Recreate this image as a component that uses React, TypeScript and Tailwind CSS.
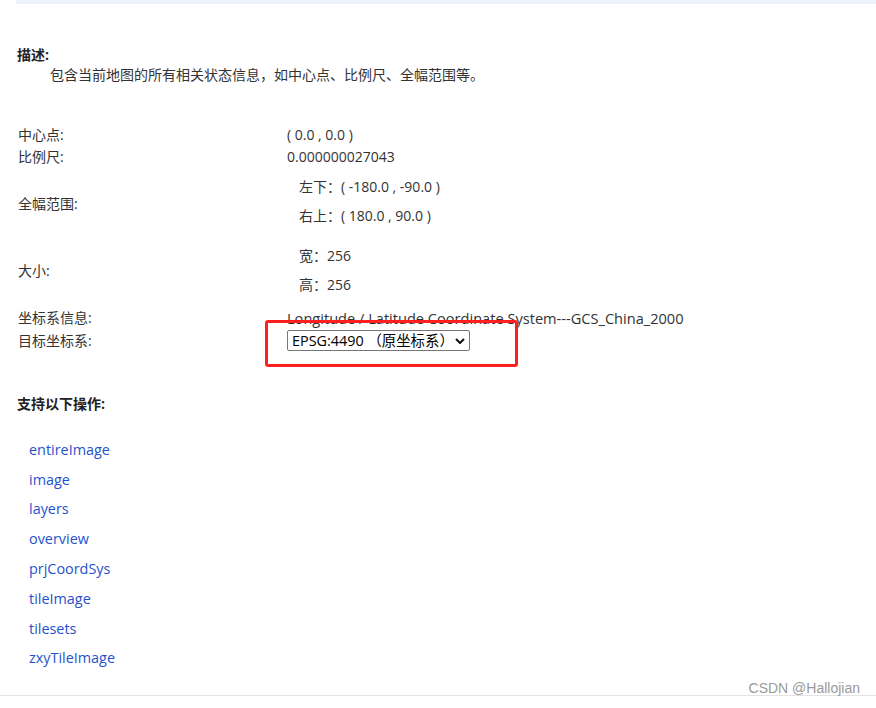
import { useState } from "react";

const links = [
  "entireImage",
  "image",
  "layers",
  "overview",
  "prjCoordSys",
  "tileImage",
  "tilesets",
  "zxyTileImage",
];

function Label({ children }: { children: React.ReactNode }) {
  return <div className="w-[269px] shrink-0">{children}</div>;
}

export default function App() {
  const [target, setTarget] = useState("4490");

  return (
    <div className="relative h-[708px] w-[876px] overflow-hidden bg-white font-['Open_Sans','Noto_Sans_CJK_SC',sans-serif] text-[14px] leading-[22px] text-[#333]">
      <div className="ml-[16px] h-[4px] bg-[#eef3fb]" />

      <section className="pl-[17px] pt-[40px]">
        <h4 className="font-bold text-[#222]">描述:</h4>
        <p className="-mt-[2px] pl-[33px]">
          包含当前地图的所有相关状态信息，如中心点、比例尺、全幅范围等。
        </p>
      </section>

      <div className="mt-[38px] pl-[18px]">
        <div className="flex h-[22px] items-center">
          <Label>中心点:</Label>
          <div>( 0.0 , 0.0 )</div>
        </div>
        <div className="flex h-[22px] items-center">
          <Label>比例尺:</Label>
          <div>0.000000027043</div>
        </div>

        <div className="flex h-[72px] items-center">
          <Label>全幅范围:</Label>
          <div className="flex h-full flex-col pl-[12px] pt-[4px]">
            <div className="flex h-[29px] items-center">左下：( -180.0 , -90.0 )</div>
            <div className="flex h-[29px] items-center">右上：( 180.0 , 90.0 )</div>
          </div>
        </div>

        <div className="flex h-[62px] items-center">
          <Label>大小:</Label>
          <div className="flex h-full flex-col pl-[12px] pt-[1px]">
            <div className="flex h-[29px] items-center">宽：256</div>
            <div className="flex h-[29px] items-center">高：256</div>
          </div>
        </div>

        <div className="mt-[5px] flex h-[22px] items-center">
          <Label>坐标系信息:</Label>
          <div className="text-[14.6px]">
            Longitude / Latitude Coordinate System---GCS_China_2000
          </div>
        </div>
        <div className="flex h-[24px] items-center">
          <Label>目标坐标系:</Label>
          <div className="relative">
            <select
              value={target}
              onChange={(e) => setTarget(e.target.value)}
              className="h-[21px] w-[183px] appearance-none rounded-[2px] border border-[#767676] bg-white pl-[4px] text-[14.4px] leading-[19px] text-black outline-none"
            >
              <option value="4490">EPSG:4490 （原坐标系）</option>
              <option value="4326">EPSG:4326</option>
              <option value="3857">EPSG:3857</option>
            </select>
            <svg
              viewBox="0 0 10 6"
              className="pointer-events-none absolute right-[5px] top-[8px] h-[6px] w-[10px]"
            >
              <path d="M1 1 L5 5 L9 1" fill="none" stroke="#111" strokeWidth="2" />
            </svg>
          </div>
        </div>
      </div>

      <section className="mt-[40px] pl-[17px]">
        <h4 className="font-bold text-[#222]">支持以下操作:</h4>
        <ul className="mt-[20px] pl-[12px]">
          {links.map((l) => (
            <li key={l} className="flex h-[29.8px] items-center">
              <a href={"#" + l} className="text-[14.4px] text-[#1f52cf]">
                {l}
              </a>
            </li>
          ))}
        </ul>
      </section>

      <div className="absolute left-[265px] top-[320px] h-[47px] w-[253px] rounded-[3px] border-[3px] border-[#ff1f1f]" />

      <div className="absolute bottom-[12px] left-0 right-0 h-px bg-[#e3e3e3]" />
      <div className="absolute right-[16px] top-[677px] font-['Liberation_Sans',sans-serif] text-[14px] leading-[22px] text-[#9a9a9a]">
        CSDN @Hallojian
      </div>
    </div>
  );
}
